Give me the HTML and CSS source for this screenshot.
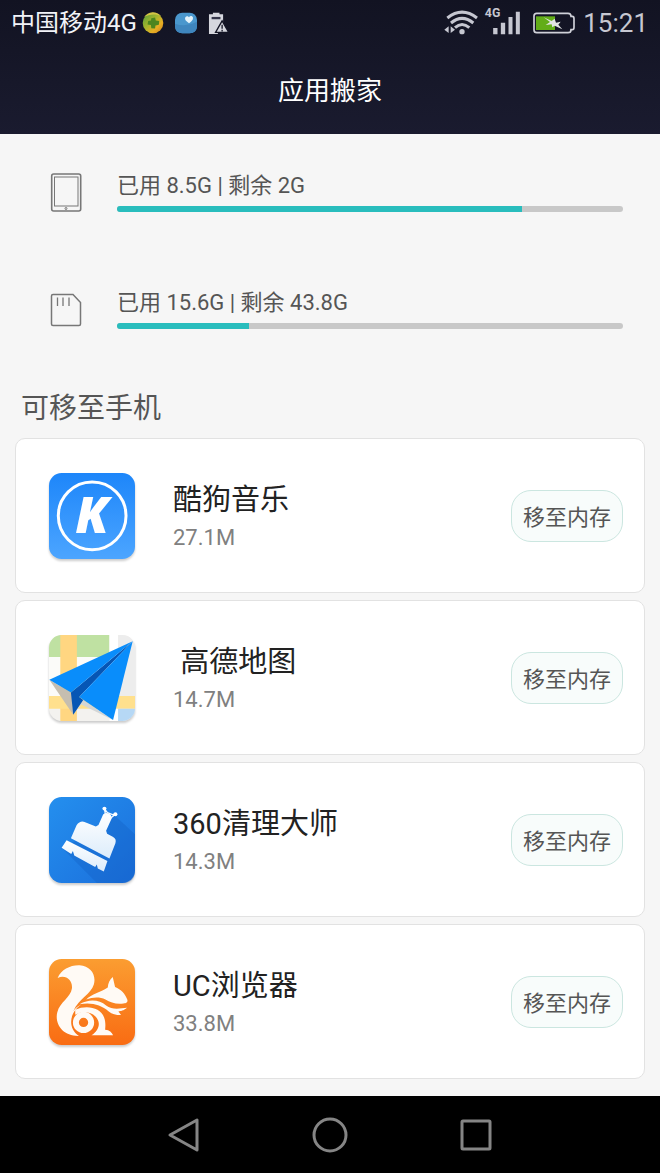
FILE: index.html
```html
<!DOCTYPE html>
<html lang="zh-CN">
<head>
<meta charset="utf-8">
<meta name="viewport" content="width=device-width, initial-scale=1">
<title>应用搬家</title>
<link rel="stylesheet" href="styles.css">
</head>
<body>
<header class="top">
  <div class="status">
    <div class="status-left">
      <span class="carrier">中国移动4G</span>
      <svg class="st-badge" viewBox="427 35 64 64" aria-hidden="true">
        <defs><linearGradient id="ball" x1="0" y1="0" x2="1" y2="1"><stop offset="0" stop-color="#4f9e3a"/><stop offset=".45" stop-color="#a9b52c"/><stop offset=".7" stop-color="#e8ae24"/><stop offset="1" stop-color="#c9801c"/></linearGradient></defs>
        <circle cx="459" cy="67" r="30" fill="url(#ball)"/>
        <path d="M433 50a31 31 0 0 1 50-3c-14-7-35-7-50 3z" fill="#d2c445"/>
        <path d="M454 53l11-2 2 9 10 1-1 11-10 2-1 9-11-1-1-9-10-2 2-10 8-1z" fill="#4c851f"/>
      </svg>
      <svg class="st-badge" viewBox="525 34 66 64" aria-hidden="true">
        <rect x="525" y="35" width="66" height="62" rx="22" fill="#4a97cd"/>
        <path d="M525 68q33 12 66-6v13q0 22-22 22h-22q-22 0-22-22z" fill="#3f86be"/>
        <path d="M567 67c-10-7-14-12-11-18 3-5 9-4 11 0 3-5 10-5 12 1 1 6-4 11-12 17z" fill="#e4f3fb"/>
      </svg>
      <svg class="st-batt" viewBox="625 34 62 70" aria-hidden="true">
        <path d="M639 41v-5h20v5h11v24l-16 30v6h-27V41z" fill="#d6d7de"/>
        <path d="M635 49h27v7h-27z" fill="#34354a"/>
        <path d="M667 61l20 35h-40z" fill="#d6d7de" stroke="#131424" stroke-width="4"/>
        <path d="M667 73v12M667 88v5" stroke="#131424" stroke-width="4"/>
      </svg>
    </div>
    <div class="status-right">
      <svg class="st-wifi" viewBox="45 34 102 72" fill="none" stroke="#c6c7d1" aria-hidden="true">
        <g stroke-width="9"><path d="M55 55q44-35 89 0"/><path d="M66 70q33-28 67 0"/><path d="M78 84q21-19 43 0"/></g>
        <circle cx="99" cy="96" r="8" fill="#c6c7d1" stroke="none"/>
        <path d="M46 90l13-10v20zM78 90L65 80v20z" fill="#c6c7d1" stroke="none"/>
      </svg>
      <svg class="st-signal" viewBox="163 27 110 84" fill="#c6c7d1" aria-hidden="true">
        <text class="net" x="165" y="52">4G</text>
        <path d="M190 84h13v19h-13zM213 68h13v35h-13zM236 51h12v52h-12zM258 35h12v68h-12z"/>
      </svg>
      <svg class="st-power" viewBox="313 37 126 66" aria-hidden="true">
        <path d="M324 41h94q9 0 9 9h4q5 0 5 7v26q0 7-5 7h-4q0 9-9 9h-94q-8 0-8-8V49q0-8 8-8z" fill="none" stroke="#d0d1d9" stroke-width="5"/>
        <path d="M322 50h57v41h-57z" fill="#62ad18"/>
        <path d="M345 53l24 11 9-7 4 12 14-3-7 9 12 14-23-11-7 5-2-9-18 2 13-9z" fill="#e1e4e2"/>
      </svg>
      <time class="clock">15:21</time>
    </div>
  </div>
  <h1 class="title">应用搬家</h1>
</header>

<main class="content">
  <section class="storage">
    <div class="volume">
      <svg class="volume-icon" viewBox="0 0 32 39" fill="none" stroke="#777" aria-hidden="true">
        <rect x="1.700" y="1" width="29" height="37" rx="2" stroke-width="1.600"/>
        <rect x="4.500" y="4" width="23.500" height="29" stroke-width="1"/>
        <circle cx="16" cy="35.500" r="1" stroke-width="1"/>
      </svg>
      <div class="volume-body">
        <label class="usage" for="phone">已用 8.5G | 剩余 2G</label>
        <progress class="bar" id="phone" value="80" max="100"></progress>
      </div>
    </div>
    <div class="volume">
      <svg class="volume-icon" viewBox="0 0 32 39" fill="none" stroke="#777" aria-hidden="true">
        <path d="M3 4.500h20l7.500 8v21.500q0 1.500-1.500 1.500H3q-1.500 0-1.500-1.500V6q0-1.500 1.500-1.500z" stroke-width="1.500"/>
        <path d="M7.500 7.500V16M13 7.500V16M19 7.500V16" stroke-width="1.300"/>
      </svg>
      <div class="volume-body">
        <label class="usage" for="card">已用 15.6G | 剩余 43.8G</label>
        <progress class="bar" id="card" value="26" max="100"></progress>
      </div>
    </div>
  </section>

  <h2 class="section-title">可移至手机</h2>
  <ul class="apps">
    <li class="app">
      <svg class="app-icon" viewBox="42 36 259 259" aria-hidden="true">
        <defs><linearGradient id="kg" x1="0" y1="0" x2="0" y2="1"><stop offset="0" stop-color="#1d86fa"/><stop offset="1" stop-color="#4ca5ff"/></linearGradient></defs>
        <rect x="42" y="36" width="259" height="259" rx="38" fill="url(#kg)"/>
        <circle cx="172" cy="165" r="102" fill="none" stroke="#fff" stroke-width="9"/>
        <text class="logo-k" x="121" y="218">K</text>
      </svg>
      <div class="app-text"><h3 class="app-name">酷狗音乐</h3><p class="app-size">27.1M</p></div>
      <button class="move" type="button">移至内存</button>
    </li>
    <li class="app">
      <svg class="app-icon" viewBox="42 44 259 259" aria-hidden="true">
        <defs><clipPath id="tile"><rect x="42" y="44" width="259" height="259" rx="38"/></clipPath></defs>
        <g clip-path="url(#tile)">
          <path d="M42 44h259v259H42z" fill="#f3f2ef"/>
          <path d="M42 44h182v66H42z" fill="#bfe1a2"/>
          <path d="M42 110h182v120H42z" fill="#fbfbf9"/>
          <path d="M224 44h26v259h-26z" fill="#fff"/>
          <path d="M250 44h51v184h-51z" fill="#ededed"/>
          <path d="M76 44h50v259H76z" fill="#ffd681"/>
          <path d="M42 228h259v38H42z" fill="#ffe08d"/>
          <path d="M250 266h51v37h-51z" fill="#b6d8f5"/>
        </g>
        <path d="M43 179l67 40 5 65z" fill="#c5beb0"/>
        <path d="M135 233l-20 51 24-31 96 47z" fill="#d4d6d5"/>
        <path d="M108 217L294 63 133 231l12 9-30 44z" fill="#0656b5"/>
        <path d="M43 179L294 63 108 217z" fill="#098dfb"/>
        <path d="M294 63l-59 237-102-69z" fill="#098dfb"/>
      </svg>
      <div class="app-text"><h3 class="app-name">&nbsp;高德地图</h3><p class="app-size">14.7M</p></div>
      <button class="move" type="button">移至内存</button>
    </li>
    <li class="app">
      <svg class="app-icon" viewBox="42 36 259 259" aria-hidden="true">
        <defs>
          <linearGradient id="cl" x1="0" y1="0" x2="1" y2="1"><stop offset="0" stop-color="#248fee"/><stop offset="1" stop-color="#1b6fdc"/></linearGradient>
          <linearGradient id="br" x1="0" y1="0" x2="0" y2="1"><stop offset="0" stop-color="#fff"/><stop offset="1" stop-color="#dcecfb"/></linearGradient>
        </defs>
        <rect x="42" y="36" width="259" height="259" rx="38" fill="url(#cl)"/>
        <path d="M240 92l61 56v109q0 38-38 38h-77L82 190l124-68z" fill="#1259bd" opacity=".3"/>
        <g fill="url(#br)">
          <path d="M125 121q10-14 24-10l34 14 8-5 14-31q5-7 14-4 12 3 12 15l-17 38 3 9 17 9q12 6 8 19l-18 46-116-61z"/>
          <path d="M95 166l123 63-11 31-18-9-3-12-5 8-63-35-4-13-5 9-29-19z"/>
        </g>
        <path d="M209 72l9 11 15 6 9-1M209 72l4 22M242 88l-15 12" fill="none" stroke="#f4faff" stroke-width="4"/>
        <circle cx="209" cy="71" r="6" fill="#fff"/><circle cx="242" cy="88" r="6" fill="#fff"/>
      </svg>
      <div class="app-text"><h3 class="app-name">360清理大师</h3><p class="app-size">14.3M</p></div>
      <button class="move" type="button">移至内存</button>
    </li>
    <li class="app">
      <svg class="app-icon" viewBox="42 44 259 259" aria-hidden="true">
        <defs><linearGradient id="uc" x1="0" y1="0" x2="0" y2="1"><stop offset="0" stop-color="#fb9d31"/><stop offset="1" stop-color="#f96c13"/></linearGradient></defs>
        <rect x="42" y="44" width="259" height="259" rx="38" fill="url(#uc)"/>
        <g fill="#fffaf5">
          <path d="M132 276C84 277 58 240 67 204c8-30 40-44 44-71 3-24-17-43-43-32 11-25 38-39 66-38 34 2 51 30 43 58-9 30-45 42-62 80 8-10 15-16 23-19-32 22-43 67-6 94z"/>
          <path d="M154 166c17-17 42-21 65-36 1-13 5-24 15-32l7 30c18 7 31 21 37 39 2 8-4 11-12 11-22 2-39-2-54-12-18-9-39-7-58 0z"/>
          <path d="M134 180c30-17 60-13 80 4 18 14 41 9 63 7-11 9-19 10-26 11l8 11c-16 0-27-3-37-11-24-20-50-28-88-22z"/>
          <path fill-rule="evenodd" d="M121 197c34-15 76-7 87 23 5 14 4 27 3 37 14 1 20 8 24 17h-65c24-15 29-40 12-57-16-15-40-16-61-5z"/>
        </g>
        <circle cx="146" cy="235" r="23" fill="none" stroke="#fffaf5" stroke-width="18"/>
      </svg>
      <div class="app-text"><h3 class="app-name">UC浏览器</h3><p class="app-size">33.8M</p></div>
      <button class="move" type="button">移至内存</button>
    </li>
  </ul>
</main>

<nav class="navbar" aria-label="系统导航">
  <button class="nav-btn" type="button" aria-label="返回"><svg viewBox="0 0 36 36"><path d="M31 3v30L4 18z"/></svg></button>
  <button class="nav-btn" type="button" aria-label="主页"><svg viewBox="0 0 36 36"><circle cx="18" cy="18" r="16"/></svg></button>
  <button class="nav-btn" type="button" aria-label="最近任务"><svg viewBox="0 0 36 36"><rect x="4" y="4" width="28" height="28" rx="1"/></svg></button>
</nav>
</body>
</html>
```
FILE: styles.css
```css
* { box-sizing: border-box; }

body {
  margin: 0;
  min-height: 100vh;
  display: flex;
  flex-direction: column;
  background: #f6f6f6;
  color: #555;
  font-family: Roboto, "Noto Sans CJK SC", sans-serif;
  font-size: 22px;
}

h1, h2, h3, p, ul { margin: 0; padding: 0; font-weight: 400; }
svg { display: block; flex: none; overflow: visible; }
button { font: inherit; cursor: pointer; }

.top {
  background: linear-gradient(#121322, #1a1b2f);
  color: #fff;
  padding-bottom: 23px;
}

.status {
  display: flex;
  justify-content: space-between;
  align-items: center;
  height: 46px;
  padding: 0 12px 0 11px;
}
.status-left, .status-right { display: flex; align-items: center; }
.status-left { gap: 11px; }
.carrier { font-size: 24px; line-height: 32px; margin-right: -6px; color: #f2f3f8; }
.st-badge { width: 22px; height: 22px; }
.st-batt { width: 21px; height: 23px; }
.status-right { gap: 8px; }
.st-wifi { width: 34px; height: 24px; }
.st-signal { width: 37px; height: 28px; margin-left: -2px; }
.st-power { width: 42px; height: 22px; margin-left: 4px; }
.net { font-size: 37px; font-weight: 700; }
.clock { font-size: 26px; line-height: 32px; color: #c6c7d1; }

.title {
  font-size: 26px;
  line-height: 40px;
  padding-top: 25px;
  text-align: center;
}

.content { flex: 1; padding: 36px 15px 17px; }

.storage {
  display: flex;
  flex-direction: column;
  gap: 75px;
  padding: 0 22px 0 35px;
}
.volume { display: flex; align-items: flex-end; gap: 35px; }
.volume-icon { width: 32px; height: 39px; }
.volume-body { flex: 1; display: flex; flex-direction: column; gap: 4px; }
.usage { line-height: 32px; }
.bar {
  appearance: none;
  display: block;
  width: 100%;
  height: 6px;
  border: 0;
  border-radius: 3px;
  overflow: hidden;
  background: #c8c8c8;
}
.bar::-webkit-progress-bar { background: #c8c8c8; }
.bar::-webkit-progress-value { background: #29bdbd; }

.section-title {
  margin: 60px 0 9px;
  padding-left: 6px;
  font-size: 28px;
  line-height: 40px;
}

.apps { list-style: none; display: flex; flex-direction: column; gap: 7px; }
.app {
  display: flex;
  align-items: center;
  min-height: 155px;
  padding: 0 21px 0 33px;
  background: #fff;
  border: 1px solid #e2e2e2;
  border-radius: 10px;
}
.app-icon { width: 86px; height: 86px; filter: drop-shadow(0 2px 1px rgba(0, 0, 0, .2)); }
.logo-k {
  font-family: "Open Sans", sans-serif;
  font-size: 151px;
  font-weight: 800;
  font-style: italic;
  fill: #fff;
}
.app-text { flex: 1; padding-left: 38px; }
.app-name { font-size: 29px; line-height: 44px; color: #222; }
.app-size { line-height: 32px; color: #808080; }

.move {
  height: 52px;
  padding: 0 11px 2px;
  border: 1px solid #cbe6e0;
  border-radius: 20px;
  background: #f8fcfb;
  color: #555;
}

.navbar {
  display: flex;
  justify-content: center;
  align-items: center;
  gap: 110px;
  height: 77px;
  background: #000;
}
.nav-btn { padding: 0; border: 0; background: none; }
.nav-btn svg { width: 36px; height: 36px; fill: none; stroke: #858585; stroke-width: 3; stroke-linejoin: round; }
```
